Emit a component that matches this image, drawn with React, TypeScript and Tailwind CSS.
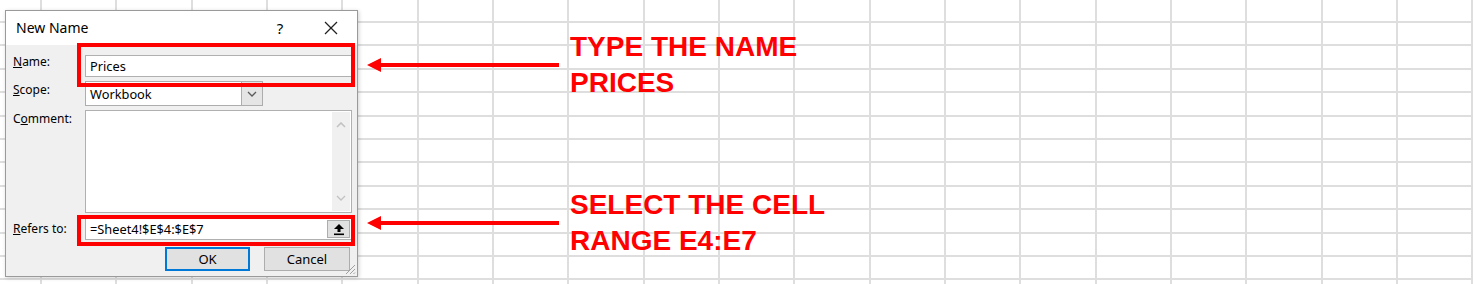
import React from "react";

const COLS = 20;
const ROWS = 13;

function Grid() {
  const cells = [];
  for (let r = 0; r < ROWS; r++) {
    for (let c = 0; c < COLS; c++) {
      cells.push(<div key={`${r}-${c}`} className="border-r-2 border-b-2 border-[#dedede]" />);
    }
  }
  return (
    <div className="grid grid-cols-[42px_repeat(19,75.33px)] grid-rows-[23px_repeat(12,23.42px)] w-[1473px] h-[284px] bg-white">
      {cells}
    </div>
  );
}

function Arrow() {
  return (
    <svg width="192" height="16" viewBox="0 0 192 16" className="block">
      <polygon points="0,8 14,1 14,15" fill="#ff0000" />
      <rect x="12" y="6" width="180" height="4" fill="#ff0000" />
    </svg>
  );
}

function ChevronDown({ color = "#5a5a5a" }: { color?: string }) {
  return (
    <svg width="10" height="6" viewBox="0 0 10 6">
      <polyline points="1,1 5,5 9,1" fill="none" stroke={color} strokeWidth="1.3" />
    </svg>
  );
}
function ChevronUp({ color = "#5a5a5a" }: { color?: string }) {
  return (
    <svg width="10" height="6" viewBox="0 0 10 6">
      <polyline points="1,5 5,1 9,5" fill="none" stroke={color} strokeWidth="1.6" />
    </svg>
  );
}

function Dialog() {
  const label = "w-[72px] shrink-0 text-[12px] leading-[16px] text-black";
  return (
    <div
      className="absolute left-[5px] top-[10px] w-[353px] h-[267px] border border-[#9a9a9a] bg-[#f0f0f0] shadow-[1px_1px_4px_rgba(0,0,0,0.18)] flex flex-col"
      style={{ fontFamily: '"Noto Sans", "Open Sans", sans-serif' }}
    >
      <div className="h-[34px] bg-white flex items-center pl-[10px] shrink-0">
        <span className="flex-1 text-[14px] leading-[18px] text-black">New Name</span>
        <span className="w-[30px] text-center text-[15px] leading-[18px] text-black mr-[21px]">?</span>
        <span className="w-[30px] flex justify-center mr-[11px]">
          <svg width="14" height="14" viewBox="0 0 14 14">
            <line x1="1" y1="1" x2="13" y2="13" stroke="#222" strokeWidth="1.2" />
            <line x1="13" y1="1" x2="1" y2="13" stroke="#222" strokeWidth="1.2" />
          </svg>
        </span>
      </div>
      <div className="flex flex-col pl-[7px] pr-[5px] pt-[10px] relative flex-1">
        <div className="flex items-start">
          <span className={`${label} mt-[-1px]`}>
            <u>N</u>ame:
          </span>
          <div className="flex-1 h-[22px] bg-white border border-[#b0b0b0] flex items-center pl-[4px] text-[12.8px] leading-[16px] text-black">
            Prices
          </div>
        </div>
        <div className="flex items-start mt-[4px]">
          <span className={`${label} mt-[1px]`}>
            <u>S</u>cope:
          </span>
          <div className="w-[178px] h-[25px] bg-white border border-[#adadad] flex items-stretch">
            <div className="flex-1 flex items-center pl-[4px] text-[12.8px] leading-[16px] text-black">Workbook</div>
            <div className="w-[21px] bg-[#e5e5e5] border-l border-[#adadad] flex items-center justify-center">
              <ChevronDown />
            </div>
          </div>
        </div>
        <div className="flex items-start mt-[4px]">
          <span className={`${label} mt-[1px]`}>
            C<u>o</u>mment:
          </span>
          <div className="flex-1 h-[103px] bg-white border border-[#b0b0b0] flex justify-end pt-[1px] pb-[1px] pr-[1px]">
            <div className="w-[18px] bg-[#f0f0f0] flex flex-col items-center justify-between py-[10px]">
              <ChevronUp color="#c2c2c2" />
              <ChevronDown color="#c2c2c2" />
            </div>
          </div>
        </div>
        <div className="flex items-start mt-[5px]">
          <span className={`${label} mt-[3px]`}>
            <u>R</u>efers to:
          </span>
          <div className="flex-1 h-[22px] bg-white border border-[#b0b0b0] flex items-stretch">
            <div className="flex-1 flex items-center pl-[4px] text-[12.8px] leading-[16px] text-black">=Sheet4!$E$4:$E$7</div>
            <div className="w-[23px] my-[1px] mr-[1px] bg-[#e1e1e1] border border-[#adadad] flex items-center justify-center">
              <svg width="12" height="13" viewBox="0 0 12 13">
                <polygon points="6,1 11,6 1,6" fill="#000" />
                <rect x="4.5" y="5" width="3" height="4" fill="#000" />
                <rect x="1" y="10.5" width="10" height="1.6" fill="#000" />
              </svg>
            </div>
          </div>
        </div>
        <div className="flex justify-end gap-[14px] mt-[7px] mr-[2px]">
          <div className="w-[85px] h-[24px] bg-[#e1e1e1] border-2 border-[#0078d7] flex items-center justify-center text-[13px] leading-[16px] text-black">
            OK
          </div>
          <div className="w-[86px] h-[24px] bg-[#e1e1e1] border border-[#adadad] flex items-center justify-center text-[13px] leading-[16px] text-black">
            Cancel
          </div>
        </div>
        <svg width="12" height="12" viewBox="0 0 12 12" className="absolute right-[1px] bottom-[1px]">
          <line x1="11" y1="2" x2="2" y2="11" stroke="#a0a0a0" strokeWidth="1" />
          <line x1="11" y1="6" x2="6" y2="11" stroke="#a0a0a0" strokeWidth="1" />
          <line x1="11" y1="9.5" x2="9.5" y2="11" stroke="#a0a0a0" strokeWidth="1" />
        </svg>
      </div>
    </div>
  );
}

function Note({ lines }: { lines: string[] }) {
  return (
    <div
      className="text-[28px] leading-[36px] font-bold text-[#ff0000]"
      style={{ fontFamily: '"Liberation Sans", Arial, sans-serif' }}
    >
      {lines.map((l) => (
        <div key={l}>{l}</div>
      ))}
    </div>
  );
}

export default function App() {
  return (
    <div className="relative w-[1473px] h-[284px] overflow-hidden bg-white">
      <Grid />
      <Dialog />
      <div className="absolute left-[77px] top-[43px] w-[278px] h-[44px] border-4 border-[#ff0000]" />
      <div className="absolute left-[77px] top-[215px] w-[278px] h-[31px] border-4 border-[#ff0000]" />
      <div className="absolute left-[367px] top-[57px]">
        <Arrow />
      </div>
      <div className="absolute left-[367px] top-[215px]">
        <Arrow />
      </div>
      <div className="absolute left-[570px] top-[29px]">
        <Note lines={["TYPE THE NAME", "PRICES"]} />
      </div>
      <div className="absolute left-[570px] top-[187px]">
        <Note lines={["SELECT THE CELL", "RANGE E4:E7"]} />
      </div>
    </div>
  );
}
